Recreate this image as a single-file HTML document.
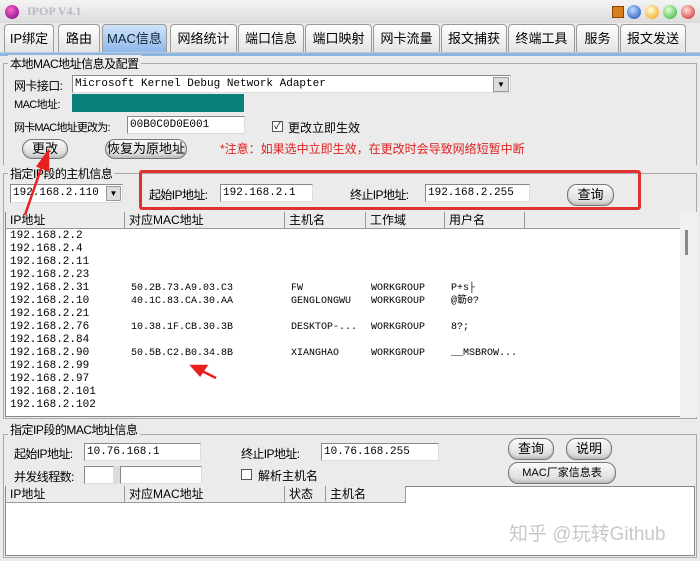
<!DOCTYPE html><html><head><meta charset="utf-8"><style>
*{margin:0;padding:0;box-sizing:border-box}
body{width:700px;height:561px;background:#ebebeb;position:relative;overflow:hidden;font-family:"Liberation Sans","Noto Sans CJK SC",sans-serif;font-size:12px;color:#000}
.a{position:absolute;white-space:nowrap}
.m{font-family:"Liberation Mono","Noto Sans CJK SC",monospace;font-size:11px}
.tab{position:absolute;top:24px;height:28px;border:1px solid #9a9a9a;border-bottom:none;border-radius:4px 4px 0 0;background:linear-gradient(#fff,#e4e4e4);text-align:center;line-height:28px;font-size:13px}
.inp{position:absolute;background:#fff;border:1px solid #888;border-right-color:#ddd;border-bottom-color:#ddd;height:18px;line-height:16px;padding-left:2px}
.btn{position:absolute;border:1px solid #777;border-radius:10px;background:linear-gradient(#fafafa,#d6d6d6);text-align:center;font-size:13px;box-shadow:inset 0 -2px 2px #bbb}
.grp{position:absolute;border:1px solid #aaa}
.lbl{position:absolute;background:#ebebeb;padding:0 2px;font-size:12px;letter-spacing:-0.5px}
.hd{position:absolute;height:17px;border-right:1px solid #999;border-bottom:1px solid #999;background:#ececec;line-height:16px;padding-left:4px;font-size:12px}
.dot{position:absolute;top:5px;width:14px;height:14px;border-radius:50%}
.s{letter-spacing:-0.6px}
</style></head><body>
<div class="a" style="left:0;top:0;width:700px;height:23px;background:linear-gradient(#f4f4f4,#dcdcdc)"></div>
<div class="dot" style="left:5px;background:radial-gradient(circle at 40% 35%,#f6c,#708)"></div>
<div class="a" style="left:27px;top:4px;color:#b8b8c8;font-family:'Liberation Serif',serif;font-size:12px;font-weight:bold">IPOP V4.1</div>
<div class="a" style="left:612px;top:6px;width:12px;height:12px;background:#d88020;border:1px solid #840"></div>
<div class="dot" style="left:627px;background:radial-gradient(circle at 40% 35%,#bdf,#14b)"></div>
<div class="dot" style="left:645px;background:radial-gradient(circle at 40% 35%,#ffd,#e90)"></div>
<div class="dot" style="left:663px;background:radial-gradient(circle at 40% 35%,#dfd,#3a2)"></div>
<div class="dot" style="left:681px;background:radial-gradient(circle at 40% 35%,#fdd,#c22)"></div>
<div class="tab" style="left:4px;width:50px">IP绑定</div>
<div class="tab" style="left:58px;width:42px">路由</div>
<div class="tab" style="left:102px;width:65px;background:linear-gradient(#cfe3fb,#8eb8ea);color:#123">MAC信息</div>
<div class="tab" style="left:170px;width:67px">网络统计</div>
<div class="tab" style="left:238px;width:66px">端口信息</div>
<div class="tab" style="left:305px;width:67px">端口映射</div>
<div class="tab" style="left:373px;width:67px">网卡流量</div>
<div class="tab" style="left:441px;width:66px">报文捕获</div>
<div class="tab" style="left:508px;width:67px">终端工具</div>
<div class="tab" style="left:576px;width:43px">服务</div>
<div class="tab" style="left:620px;width:66px">报文发送</div>
<div class="a" style="left:0;top:52px;width:700px;height:4px;background:#8cb6e0;border-top:1px solid #bcd"></div>

<div class="grp" style="left:3px;top:63px;width:694px;height:102px;border-bottom:none"></div>
<div class="lbl" style="left:8px;top:55px">本地MAC地址信息及配置</div>
<div class="a s" style="left:14px;top:77px">网卡接口:</div>
<div class="inp m" style="left:72px;top:75px;width:439px">Microsoft Kernel Debug Network Adapter</div>
<div class="a" style="left:493px;top:77px;width:16px;height:15px;background:#ddd;border:1px solid #999;font-size:8px;text-align:center;line-height:14px">▼</div>
<div class="a s" style="left:14px;top:96px;font-size:11px">MAC地址:</div>
<div class="a" style="left:72px;top:94px;width:172px;height:18px;background:#0a807a"></div>
<div class="a" style="left:14px;top:119px;font-size:11px;letter-spacing:-0.8px">网卡MAC地址更改为:</div>
<div class="inp m" style="left:127px;top:116px;width:118px">00B0C0D0E001</div>
<div class="a" style="left:272px;top:121px;width:11px;height:11px;border:1px solid #555;background:#fff;font-size:10px;line-height:9px;text-align:center">✓</div>
<div class="a" style="left:288px;top:119px">更改立即生效</div>
<div class="btn" style="left:22px;top:139px;width:46px;height:20px;line-height:18px">更改</div>
<div class="btn" style="left:105px;top:139px;width:82px;height:20px;line-height:18px">恢复为原地址</div>
<div class="a" style="left:220px;top:140px;color:#e02020">*注意：如果选中立即生效，在更改时会导致网络短暂中断</div>

<div class="grp" style="left:3px;top:173px;width:694px;height:246px"></div>
<div class="lbl" style="left:8px;top:165px">指定IP段的主机信息</div>
<div class="inp m" style="left:10px;top:184px;width:113px;height:19px">192.168.2.110</div>
<div class="a" style="left:106px;top:186px;width:15px;height:15px;background:#ddd;border:1px solid #999;font-size:8px;text-align:center;line-height:14px">▼</div>
<div class="a" style="left:139px;top:170px;width:502px;height:40px;border:3px solid #e03030;border-radius:3px"></div>
<div class="a s" style="left:149px;top:186px">起始IP地址:</div>
<div class="inp m" style="left:220px;top:184px;width:93px">192.168.2.1</div>
<div class="a s" style="left:350px;top:186px">终止IP地址:</div>
<div class="inp m" style="left:425px;top:184px;width:105px">192.168.2.255</div>
<div class="btn" style="left:567px;top:184px;width:47px;height:22px;line-height:20px">查询</div>
<div class="a" style="left:5px;top:212px;width:677px;height:205px;background:#fff;border:1px solid #888"></div>
<div class="hd" style="left:6px;top:212px;width:119px">IP地址</div>
<div class="hd" style="left:125px;top:212px;width:160px">对应MAC地址</div>
<div class="hd" style="left:285px;top:212px;width:81px">主机名</div>
<div class="hd" style="left:366px;top:212px;width:79px">工作域</div>
<div class="hd" style="left:445px;top:212px;width:80px">用户名</div>
<div class="hd" style="left:525px;top:212px;width:156px"></div>
<div class="a" style="left:680px;top:212px;width:17px;height:205px;background:#f0f0f0"></div>
<div class="a" style="left:685px;top:230px;width:3px;height:25px;background:#888"></div>
<div class="a m" style="left:10px;top:230px;line-height:13px">192.168.2.2<br>192.168.2.4<br>192.168.2.11<br>192.168.2.23<br>192.168.2.31<br>192.168.2.10<br>192.168.2.21<br>192.168.2.76<br>192.168.2.84<br>192.168.2.90<br>192.168.2.99<br>192.168.2.97<br>192.168.2.101<br>192.168.2.102</div>
<div class="a m" style="left:131px;top:282px;line-height:13px;font-size:10px">50.2B.73.A9.03.C3<br>40.1C.83.CA.30.AA<br><br>10.38.1F.CB.30.3B<br><br>50.5B.C2.B0.34.8B</div>
<div class="a m" style="left:291px;top:282px;line-height:13px;font-size:10px">FW<br>GENGLONGWU<br><br>DESKTOP-...<br><br>XIANGHAO</div>
<div class="a m" style="left:371px;top:282px;line-height:13px;font-size:10px">WORKGROUP<br>WORKGROUP<br><br>WORKGROUP<br><br>WORKGROUP</div>
<div class="a m" style="left:451px;top:282px;line-height:13px;font-size:10px">P+s├<br>@簕0?<br><br>8?;<br><br>__MSBROW...</div>
<svg class="a" style="left:0;top:0" width="700" height="561"><g stroke="#e82020" stroke-width="2.5" fill="#e82020"><line x1="25" y1="215" x2="44" y2="160"/><polygon points="38,166 48,152 48,170"/><line x1="216" y1="378" x2="198" y2="369"/><polygon points="192,366 206,366 200,375"/></g></svg>

<div class="grp" style="left:3px;top:434px;width:694px;height:124px"></div>
<div class="lbl" style="left:8px;top:421px">指定IP段的MAC地址信息</div>
<div class="a s" style="left:14px;top:445px">起始IP地址:</div>
<div class="inp m" style="left:84px;top:443px;width:117px">10.76.168.1</div>
<div class="a s" style="left:241px;top:445px">终止IP地址:</div>
<div class="inp m" style="left:321px;top:443px;width:118px">10.76.168.255</div>
<div class="btn" style="left:508px;top:438px;width:46px;height:22px;line-height:20px">查询</div>
<div class="btn" style="left:566px;top:438px;width:46px;height:22px;line-height:20px">说明</div>
<div class="btn" style="left:508px;top:462px;width:108px;height:22px;line-height:20px;font-size:11px">MAC厂家信息表</div>
<div class="a s" style="left:14px;top:468px">并发线程数:</div>
<div class="inp" style="left:84px;top:466px;width:30px"></div>
<div class="a" style="left:114px;top:466px;width:6px;height:18px;background:#ddd"></div>
<div class="inp" style="left:120px;top:466px;width:82px"></div>
<div class="a" style="left:241px;top:469px;width:11px;height:11px;border:1px solid #555;background:#fff"></div>
<div class="a" style="left:258px;top:467px">解析主机名</div>
<div class="a" style="left:5px;top:486px;width:690px;height:70px;background:#fff;border:1px solid #888"></div>
<div class="hd" style="left:6px;top:486px;width:119px">IP地址</div>
<div class="hd" style="left:125px;top:486px;width:160px">对应MAC地址</div>
<div class="hd" style="left:285px;top:486px;width:41px">状态</div>
<div class="hd" style="left:326px;top:486px;width:80px">主机名</div>
<div class="a" style="left:509px;top:519px;color:#c8c8c8;font-size:19px">知乎 @玩转Github</div>
</body></html>
